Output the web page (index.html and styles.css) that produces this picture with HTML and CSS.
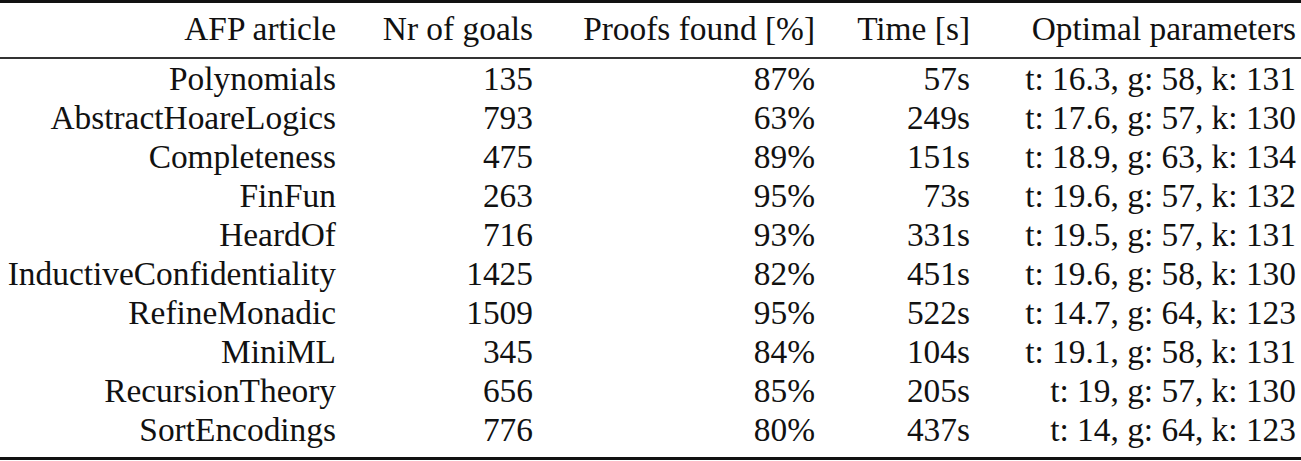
FILE: index.html
```html
<!DOCTYPE HTML>
<html>

<head>
    <meta charset='utf-8'>
    <link rel="stylesheet" href="styles.css">
</head>

<body>
    <table class="results">
        <colgroup>
            <col class="colArticle">
            <col class="colGoals">
            <col class="colProofs">
            <col class="colTime">
            <col class="colParams">
        </colgroup>
        <thead>
            <tr>
                <th>AFP article</th>
                <th>Nr of goals</th>
                <th>Proofs found [%]</th>
                <th>Time [s]</th>
                <th>Optimal parameters</th>
            </tr>
        </thead>
        <tbody>
            <tr><td>Polynomials</td><td>135</td><td>87%</td><td>57s</td><td>t: 16.3, g: 58, k: 131</td></tr>
            <tr><td>AbstractHoareLogics</td><td>793</td><td>63%</td><td>249s</td><td>t: 17.6, g: 57, k: 130</td></tr>
            <tr><td>Completeness</td><td>475</td><td>89%</td><td>151s</td><td>t: 18.9, g: 63, k: 134</td></tr>
            <tr><td>FinFun</td><td>263</td><td>95%</td><td>73s</td><td>t: 19.6, g: 57, k: 132</td></tr>
            <tr><td>HeardOf</td><td>716</td><td>93%</td><td>331s</td><td>t: 19.5, g: 57, k: 131</td></tr>
            <tr><td>InductiveConfidentiality</td><td>1425</td><td>82%</td><td>451s</td><td>t: 19.6, g: 58, k: 130</td></tr>
            <tr><td>RefineMonadic</td><td>1509</td><td>95%</td><td>522s</td><td>t: 14.7, g: 64, k: 123</td></tr>
            <tr><td>MiniML</td><td>345</td><td>84%</td><td>104s</td><td>t: 19.1, g: 58, k: 131</td></tr>
            <tr><td>RecursionTheory</td><td>656</td><td>85%</td><td>205s</td><td>t: 19, g: 57, k: 130</td></tr>
            <tr><td>SortEncodings</td><td>776</td><td>80%</td><td>437s</td><td>t: 14, g: 64, k: 123</td></tr>
        </tbody>
    </table>
</body>

</html>
```

FILE: styles.css
```css
body {
    margin: 0;
    background: #fff;
    color: #111;
    font-family: "Liberation Serif", "Times New Roman", serif;
    font-size: 33.4px;
}

.results {
    width: 1301px;
    table-layout: fixed;
    border-collapse: collapse;
    border-top: 3px solid #111;
    border-bottom: 3px solid #111;
}

.colArticle {
    width: 336px;
}

.colGoals {
    width: 197px;
}

.colProofs {
    width: 282px;
}

.colTime {
    width: 155px;
}

.colParams {
    width: 331px;
}

.results th,
.results td {
    padding: 0;
    line-height: 39px;
    text-align: right;
    white-space: nowrap;
}

.results th {
    font-weight: normal;
    padding-top: 6px;
    padding-bottom: 9px;
    border-bottom: 2px solid #333;
}

.results th:last-child,
.results td:last-child {
    padding-right: 5px;
}

.results tbody tr:last-child td {
    padding-bottom: 8px;
}
```
